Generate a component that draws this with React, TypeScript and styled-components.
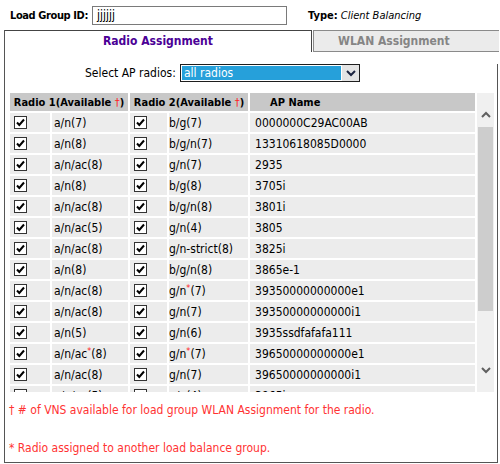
import React from 'react'
import styled, { createGlobalStyle } from 'styled-components'

const GlobalStyle = createGlobalStyle`
  html, body {
    margin: 0;
    padding: 0;
    background: #fff;
    overflow: hidden;
  }
  body {
    font-family: "DejaVu Sans Condensed", "DejaVu Sans", Tahoma, sans-serif;
    font-size: 12px;
    color: #000;
  }
`

type Row = { r1: string; r2: string; ap: string }

const ROWS: Row[] = [
  { r1: 'a/n(7)', r2: 'b/g(7)', ap: '0000000C29AC00AB' },
  { r1: 'a/n(8)', r2: 'b/g/n(7)', ap: '13310618085D0000' },
  { r1: 'a/n/ac(8)', r2: 'g/n(7)', ap: '2935' },
  { r1: 'a/n(8)', r2: 'b/g(8)', ap: '3705i' },
  { r1: 'a/n/ac(8)', r2: 'b/g/n(8)', ap: '3801i' },
  { r1: 'a/n/ac(5)', r2: 'g/n(4)', ap: '3805' },
  { r1: 'a/n/ac(8)', r2: 'g/n-strict(8)', ap: '3825i' },
  { r1: 'a/n(8)', r2: 'b/g/n(8)', ap: '3865e-1' },
  { r1: 'a/n/ac(8)', r2: 'g/n*(7)', ap: '39350000000000e1' },
  { r1: 'a/n/ac(8)', r2: 'g/n(7)', ap: '39350000000000i1' },
  { r1: 'a/n(5)', r2: 'g/n(6)', ap: '3935ssdfafafa111' },
  { r1: 'a/n/ac*(8)', r2: 'g/n*(7)', ap: '39650000000000e1' },
  { r1: 'a/n/ac(8)', r2: 'g/n(7)', ap: '39650000000000i1' },
  { r1: 'a/n/ac(5)', r2: 'g/n(4)', ap: '3965i' },
]

const TopBar = styled.div`
  display: flex;
  align-items: center;
  height: 18px;
  padding: 6px 0 0 10px;
`

const FieldLabel = styled.label`
  width: 82px;
  flex: none;
  white-space: nowrap;
  font-weight: bold;
  font-size: 11px;
  letter-spacing: -0.4px;
`

const TextBox = styled.div`
  box-sizing: border-box;
  width: 195px;
  height: 19px;
  border: 1px solid #7a7a7a;
  padding-left: 4px;
  line-height: 17px;
`

const TypeInfo = styled.div`
  margin-left: 21px;
  font-size: 11px;
  white-space: nowrap;
  b {
    font-weight: bold;
  }
  i {
    font-style: italic;
  }
`

const Panel = styled.div`
  margin: 6px 0 0 4px;
  width: 494px;
  box-sizing: border-box;
  border-left: 1px solid #555;
  border-bottom: 1px solid #555;
`

const TabRow = styled.div`
  display: flex;
  height: 22px;
  margin-right: -4px;
`

const Tab = styled.div<{ $active?: boolean }>`
  box-sizing: border-box;
  height: 22px;
  font-weight: bold;
  line-height: 21px;
  ${p =>
    p.$active
      ? `
    width: 307px;
    border-top: 1px solid #444;
    border-right: 1px solid #444;
    color: #4b0096;
    text-align: center;
  `
      : `
    margin-left: 1px;
    width: 186px;
    border: 1px solid #8a8a8a;
    border-right: none;
    background: #ebebeb;
    color: #858585;
    padding-left: 24px;
  `}
`

const Body = styled.div`
  padding-top: 12px;
`

const Inner = styled.div`
  border-right: 1px solid #555;
  padding: 0 0 7px 3px;
`

const SelectRow = styled.div`
  display: flex;
  align-items: center;
  height: 18px;
  padding-left: 77px;
`

const SelectLabel = styled.span`
  width: 95px;
`

const SelectBox = styled.div`
  box-sizing: border-box;
  display: flex;
  width: 180px;
  height: 18px;
  border: 1px solid #1e1e1e;
`

const SelectValue = styled.div`
  flex: 1;
  margin: 1px;
  background: #26a0da;
  color: #fff;
  padding-left: 2px;
  line-height: 14px;
`

const SelectArrow = styled.div`
  width: 17px;
  background: #e4e4e4;
  display: flex;
  align-items: center;
  justify-content: center;
`

const ListArea = styled.div`
  display: flex;
  margin-top: 9px;
  height: 301px;
`

const Viewport = styled.div`
  width: 469px;
  height: 301px;
  overflow: hidden;
`

const Grid = styled.table`
  table-layout: fixed;
  width: 469px;
  border-collapse: separate;
  border-spacing: 2px;
  font-size: 12px;
`

const HeadCell = styled.th<{ $left?: number }>`
  background: #c8c8c8;
  height: 18px;
  padding: 0 0 0 ${p => p.$left ?? 0}px;
  font-weight: bold;
  font-size: 11px;
  text-align: ${p => (p.$left ? 'left' : 'center')};
  white-space: nowrap;
  overflow: hidden;
`

const Dagger = styled.span`
  color: #f22;
  font-weight: normal;
`

const Cell = styled.td<{ $pad?: number }>`
  background: #ececec;
  height: 19px;
  padding: 0 0 0 ${p => p.$pad ?? 2}px;
  white-space: nowrap;
  overflow: hidden;
  vertical-align: middle;
`

const Box = styled.span`
  display: block;
  box-sizing: border-box;
  width: 13px;
  height: 13px;
  border: 1px solid #333;
  background: #fff;
  margin-left: 4px;
`

const Star = styled.sup`
  color: #f22;
  font-size: 9px;
  line-height: 0;
  vertical-align: 4px;
`

const Track = styled.div`
  width: 17px;
  margin-top: 2px;
  height: 299px;
  background: #f0f0f0;
  display: flex;
  flex-direction: column;
  align-items: center;
`

const ArrowBtn = styled.div<{ $top?: boolean }>`
  height: 17px;
  flex: none;
  display: flex;
  align-items: center;
  justify-content: center;
  margin: ${p => (p.$top ? '13px 0 4px' : 'auto 0 13px')};
`

const Thumb = styled.div`
  width: 15px;
  height: 184px;
  background: #cdcdcd;
`

const Note = styled.div<{ $gap: number }>`
  margin-top: ${p => p.$gap}px;
  color: #f33;
  line-height: 14px;
  padding-left: 1px;
`

const Chevron = ({ up, color = '#606060' }: { up?: boolean; color?: string }) => (
  <svg width="10" height="7" viewBox="0 0 10 7">
    <polyline
      points={up ? '1,6 5,2 9,6' : '1,1 5,5 9,1'}
      fill="none"
      stroke={color}
      strokeWidth="2"
    />
  </svg>
)

const CheckBox = () => (
  <Box>
    <svg width="11" height="11" viewBox="0 0 11 11" style={{ display: 'block' }}>
      <path d="M2 5.5 L4.3 8 L9 2.5" fill="none" stroke="#000" strokeWidth="2" />
    </svg>
  </Box>
)

// 'g/n*(7)' -> g/n + red star + (7)
const RadioText = ({ text }: { text: string }) => {
  const [a, b] = text.split('*')
  if (b === undefined) return <>{text}</>
  return (
    <>
      {a}
      <Star>*</Star>
      {b}
    </>
  )
}

export default function App() {
  return (
    <>
      <GlobalStyle />
      <TopBar>
        <FieldLabel>Load Group ID:</FieldLabel>
        <TextBox>jjjjjj</TextBox>
        <TypeInfo>
          <b>Type:</b> <i>Client Balancing</i>
        </TypeInfo>
      </TopBar>
      <Panel>
        <TabRow>
          <Tab $active>Radio Assignment</Tab>
          <Tab>WLAN Assignment</Tab>
        </TabRow>
        <Body>
          <Inner>
            <SelectRow>
              <SelectLabel>Select AP radios:</SelectLabel>
              <SelectBox>
                <SelectValue>all radios</SelectValue>
                <SelectArrow>
                  <Chevron color="#1c2440" />
                </SelectArrow>
              </SelectBox>
            </SelectRow>
            <ListArea>
              <Viewport>
                <Grid>
                  <colgroup>
                    <col style={{ width: 40 }} />
                    <col style={{ width: 76 }} />
                    <col style={{ width: 37 }} />
                    <col style={{ width: 79 }} />
                    <col />
                  </colgroup>
                  <thead>
                    <tr>
                      <HeadCell colSpan={2}>
                        Radio 1(Available <Dagger>†</Dagger>)
                      </HeadCell>
                      <HeadCell colSpan={2}>
                        Radio 2(Available <Dagger>†</Dagger>)
                      </HeadCell>
                      <HeadCell $left={20}>AP Name</HeadCell>
                    </tr>
                  </thead>
                  <tbody>
                    {ROWS.map((r, i) => (
                      <tr key={i}>
                        <Cell $pad={0}>
                          <CheckBox />
                        </Cell>
                        <Cell>
                          <RadioText text={r.r1} />
                        </Cell>
                        <Cell $pad={0}>
                          <CheckBox />
                        </Cell>
                        <Cell $pad={0}>
                          <RadioText text={r.r2} />
                        </Cell>
                        <Cell $pad={5}>{r.ap}</Cell>
                      </tr>
                    ))}
                  </tbody>
                </Grid>
              </Viewport>
              <Track>
                <ArrowBtn $top>
                  <Chevron up />
                </ArrowBtn>
                <Thumb />
                <ArrowBtn>
                  <Chevron />
                </ArrowBtn>
              </Track>
            </ListArea>
            <Note $gap={11}>† # of VNS available for load group WLAN Assignment for the radio.</Note>
            <Note $gap={24}>* Radio assigned to another load balance group.</Note>
          </Inner>
        </Body>
      </Panel>
    </>
  )
}
